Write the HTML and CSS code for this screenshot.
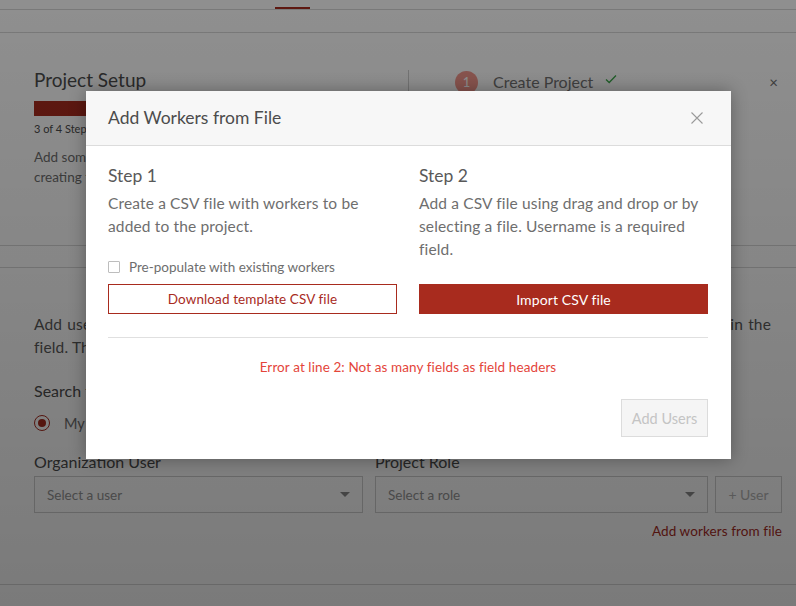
FILE: index.html
```html
<!DOCTYPE html>
<html lang="en">
<head>
<meta charset="utf-8">
<title>Add Workers from File</title>
<link rel="stylesheet" href="styles.css">
</head>
<body>
<div class="page">
  <div class="nav"><div class="nav-tab"></div></div>
  <div class="subnav"></div>

  <section class="setup">
    <div class="setup-info">
      <h1 class="setup-title">Project Setup</h1>
      <div class="progress"><div class="progress-fill"></div></div>
      <div class="setup-count">3 of 4 Steps</div>
      <p class="setup-desc">Add some workers to the project. You can continue<br>creating the project after workers are added.</p>
    </div>
    <div class="setup-steps">
      <div class="step-item">
        <span class="step-num">1</span>
        <span class="step-name">Create Project</span>
        <svg class="step-check" viewBox="0 0 12 10" width="12" height="10"><path d="M1 5.5 L4.2 8.5 L11 1.5" fill="none" stroke="#3aa84a" stroke-width="1.3"/></svg>
        <span class="step-close">&#215;</span>
      </div>
      <div class="step-item">
        <span class="step-num">2</span>
        <span class="step-name">Configure Map</span>
      </div>
      <div class="step-item">
        <span class="step-num">3</span>
        <span class="step-name">Add Workers</span>
      </div>
    </div>
  </section>

  <div class="band"></div>

  <section class="workers">
    <p class="intro">Add users from your organization to the project as mobile workers who will complete assignments in the field. They will be notified when they are assigned work.</p>
    <div class="search-label">Search for users in</div>
    <div class="radio-row">
      <span class="radio"><span class="radio-dot"></span></span>
      <span class="radio-text">My Organization</span>
    </div>
    <div class="user-form">
      <div class="field field-user">
        <div class="field-label">Organization User</div>
        <div class="select"><span>Select a user</span><span class="caret"></span></div>
      </div>
      <div class="field field-role">
        <div class="field-label">Project Role</div>
        <div class="select"><span>Select a role</span><span class="caret"></span></div>
      </div>
      <button class="add-user">+ User</button>
    </div>
    <div class="file-link-row"><a class="file-link">Add workers from file</a></div>
  </section>

  <div class="footer"></div>
</div>

<div class="overlay"></div>

<div class="modal">
  <div class="modal-header">
    <h2 class="modal-title">Add Workers from File</h2>
    <svg class="modal-close" viewBox="0 0 12 12" width="12" height="12"><path d="M0.5 0.5 L11.5 11.5 M11.5 0.5 L0.5 11.5" stroke="#9a9a9a" stroke-width="1.1" fill="none"/></svg>
  </div>
  <div class="modal-body">
    <div class="steps">
      <div class="step-col">
        <h3 class="step-title">Step 1</h3>
        <p class="step-text">Create a CSV file with workers to be added to the project.</p>
        <label class="check-row"><span class="checkbox"></span><span>Pre-populate with existing workers</span></label>
        <button class="btn btn-outline">Download template CSV file</button>
      </div>
      <div class="step-col">
        <h3 class="step-title">Step 2</h3>
        <p class="step-text">Add a CSV file using drag and drop or by selecting a file. Username is a required field.</p>
        <button class="btn btn-solid">Import CSV file</button>
      </div>
    </div>
    <div class="divider"></div>
    <p class="error">Error at line 2: Not as many fields as field headers</p>
    <div class="modal-actions"><button class="btn-disabled">Add Users</button></div>
  </div>
</div>
</body>
</html>
```

FILE: styles.css
```css
* { box-sizing: border-box; }
html, body { margin: 0; padding: 0; }
body {
  font-family: "Lato", "Open Sans", sans-serif;
  background: #ffffff;
  width: 796px;
  height: 606px;
  overflow: hidden;
  position: relative;
}
h1, h2, h3, p { margin: 0; font-weight: normal; }
button { font-family: inherit; cursor: pointer; }

/* ---------- underlying page ---------- */
.page { width: 796px; height: 606px; background: #fff; color: #4c4c4c; }

.nav {
  height: 10px;
  border-bottom: 1px solid #d8d8d8;
  display: flex;
  align-items: flex-end;
  padding-left: 275px;
}
.nav-tab { width: 35px; height: 2px; background: #a82b1e; }
.subnav { height: 23px; border-bottom: 1px solid #d8d8d8; }

.setup {
  height: 213px;
  border-bottom: 1px solid #d8d8d8;
  display: flex;
  padding: 35px 14px 0 34px;
}
.setup-info { width: 374px; }
.setup-title { font-size: 19px; line-height: 24px; color: #4c4c4c; }
.progress { margin-top: 9px; height: 15px; width: 330px; background: #eee; }
.progress-fill { width: 75%; height: 100%; background: #a82b1e; }
.setup-count { font-size: 11px; line-height: 14px; margin-top: 6px; color: #4c4c4c; }
.setup-desc { font-size: 13.5px; line-height: 20px; margin-top: 11px; color: #6e6e6e; }

.setup-steps {
  flex: 1;
  border-left: 1px solid #cfcfcf;
  height: 26px;
  margin-top: 2px;
  padding-left: 46px;
}
.step-item { display: flex; align-items: center; height: 24px; margin-bottom: 12px; }
.step-num {
  width: 23px; height: 23px; border-radius: 50%;
  background: #f4968c; color: #fff; font-size: 13px;
  display: flex; align-items: center; justify-content: center;
}
.step-name { font-size: 16px; margin-left: 15px; color: #737373; line-height: 20px; }
.step-check { margin-left: 12px; margin-top: -6px; }
.step-close { margin-left: auto; font-size: 15px; color: #6e6e6e; margin-right: 4px; }

.band { height: 22px; border-bottom: 1px solid #d8d8d8; }

.workers { height: 317px; border-bottom: 1px solid #d8d8d8; padding: 45px 14px 0 34px; }
.intro {
  width: 737px; font-size: 15.5px; letter-spacing: 0.15px; line-height: 23px;
  color: #595959; text-align: justify;
}
.search-label { font-size: 16px; line-height: 22px; margin-top: 21px; color: #4c4c4c; }
.radio-row { display: flex; align-items: center; margin-top: 11px; height: 20px; }
.radio {
  width: 16px; height: 16px; border-radius: 50%;
  border: 1.5px solid #a82b1e;
  display: flex; align-items: center; justify-content: center;
}
.radio-dot { width: 8px; height: 8px; border-radius: 50%; background: #a82b1e; }
.radio-text { margin-left: 14px; font-size: 14.5px; color: #6e6e6e; }

.user-form { display: flex; align-items: flex-end; margin-top: 19px; }
.field-label { font-size: 16px; line-height: 20px; margin-bottom: 4px; color: #4c4c4c; }
.field-user { width: 329px; margin-right: 12px; }
.field-role { width: 333px; margin-right: 7px; }
.select {
  height: 37px; border: 1px solid #cfcfcf;
  display: flex; align-items: center; justify-content: space-between;
  padding: 0 12px; font-size: 13.5px; color: #959595;
}
.caret {
  width: 0; height: 0;
  border-left: 5px solid transparent; border-right: 5px solid transparent;
  border-top: 5px solid #8a8a8a;
}
.add-user {
  width: 67px; height: 37px; border: 1px solid #cfcfcf; background: #fff;
  color: #b5b5b5; font-size: 14px;
}
.file-link-row { display: flex; justify-content: flex-end; margin-top: 10px; }
.file-link { font-size: 13.5px; letter-spacing: 0.1px; color: #a82b1e; }

.footer { height: 22px; }

/* ---------- overlay ---------- */
.overlay {
  position: absolute; inset: 0;
  background: linear-gradient(to bottom, rgba(0,0,0,0.44), rgba(0,0,0,0.52));
}

/* ---------- modal ---------- */
.modal {
  position: absolute; left: 86px; top: 91px; width: 645px;
  background: #fff;
  box-shadow: 0 0 16px rgba(0,0,0,0.32);
}
.modal-header {
  height: 55px; background: #f7f7f7; border-bottom: 1px solid #dcdcdc;
  display: flex; align-items: center; justify-content: space-between;
  padding: 0 28px 0 22px;
}
.modal-title { font-size: 17.5px; color: #4c4c4c; margin-top: -2px; }
.modal-body { padding: 19px 23px 22px 22px; }
.steps { display: grid; grid-template-columns: 1fr 1fr; column-gap: 22px; }
.step-col { display: flex; flex-direction: column; }
.step-title { font-size: 17.5px; line-height: 22px; color: #595959; }
.step-text {
  font-size: 15.5px; letter-spacing: 0.15px; line-height: 23px;
  margin-top: 5px; color: #6e6e6e;
}
.check-row {
  display: flex; align-items: center; gap: 9px;
  font-size: 13.5px; color: #6e6e6e;
  margin-top: 20px; height: 18px;
}
.checkbox { width: 12px; height: 12px; border: 1px solid #bdbdbd; border-radius: 1px; }
.btn {
  height: 30px; font-size: 13.5px; letter-spacing: 0.1px; margin-top: auto;
  display: flex; align-items: center; justify-content: center;
}
.check-row + .btn { margin-top: 8px; }
.btn-outline { border: 1px solid #a82b1e; background: #fff; color: #a82b1e; }
.btn-solid { border: 1px solid #a82b1e; background: #a82b1e; color: #fff; font-size: 14px; }
.divider { height: 1px; background: #e0e0e0; margin-top: 23px; }
.error {
  font-size: 13.5px; letter-spacing: 0.1px; line-height: 20px;
  margin-top: 19px; text-align: center; color: #e4453a;
}
.modal-actions { display: flex; justify-content: flex-end; margin-top: 22px; }
.btn-disabled {
  width: 87px; height: 38px; border: 1px solid #dcdcdc; background: #f5f5f5;
  color: #c4c4c4; font-size: 14.5px;
}
```
